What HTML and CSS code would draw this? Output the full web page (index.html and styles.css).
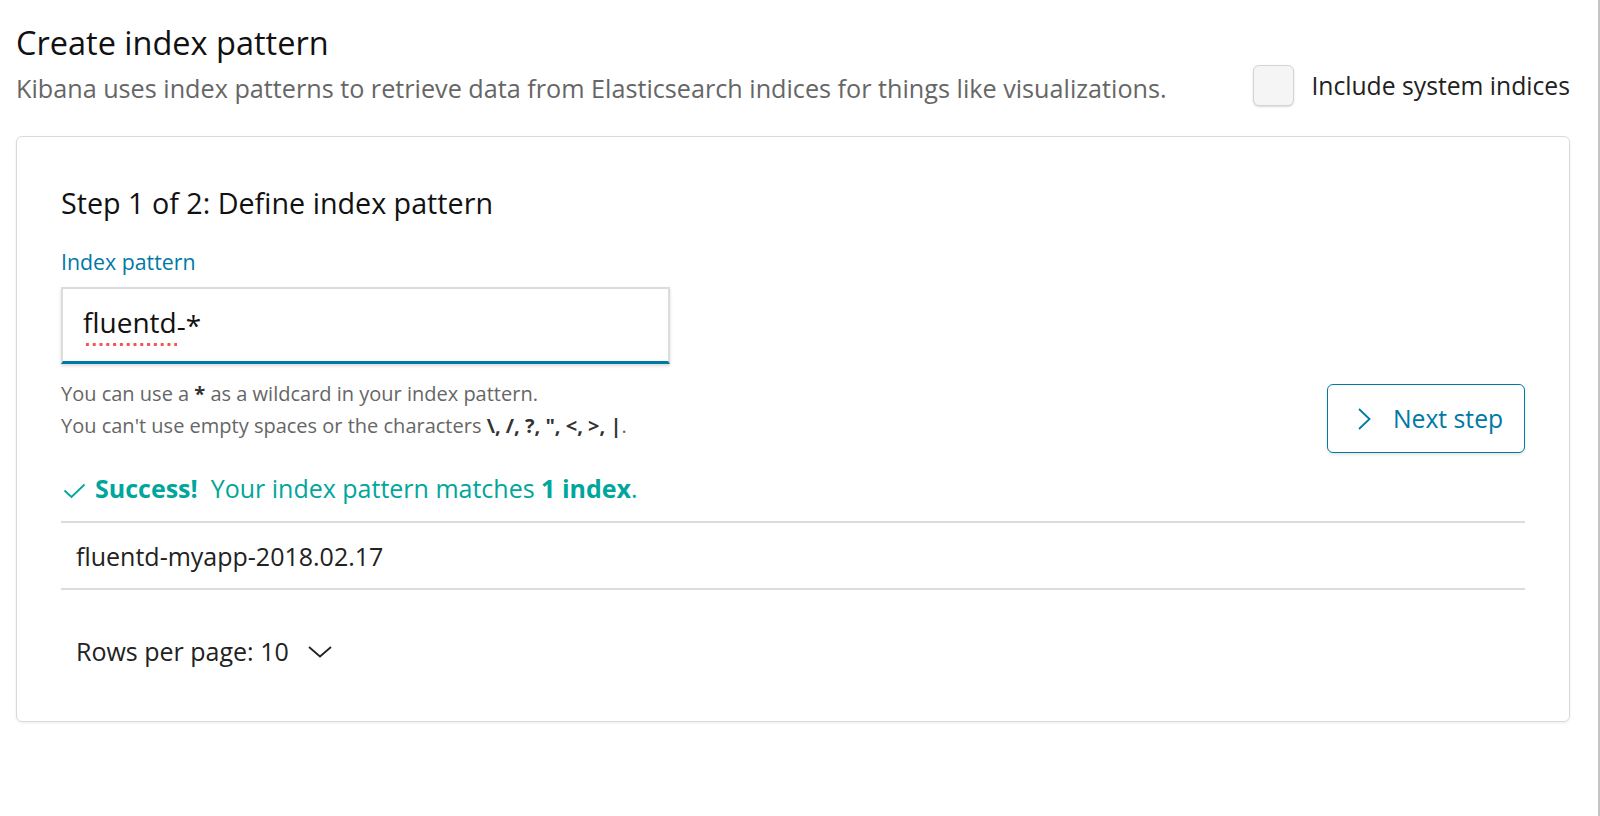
FILE: index.html
```html
<!DOCTYPE html>
<html lang="en">

<head>
    <meta charset="UTF-8">
    <meta name="viewport" content="width=device-width, initial-scale=1.0">
    <title>Create index pattern - Kibana</title>
    <link rel="stylesheet" href="styles.css">
</head>

<body>
    <div class="page">
        <!-- Header -->
        <div class="header">
            <div class="header-text">
                <h1>Create index pattern</h1>
                <p class="subtitle">Kibana uses index patterns to retrieve data from Elasticsearch indices for things like visualizations.</p>
            </div>
            <label class="system-toggle">
                <span class="checkbox"></span>
                <span>Include system indices</span>
            </label>
        </div>

        <!-- Step 1 -->
        <div class="panel">
            <h2>Step 1 of 2: Define index pattern</h2>

            <div class="form-row">
                <div class="field">
                    <div class="field-label">Index pattern</div>
                    <div class="field-input"><span class="misspelled">fluentd</span>-*</div>
                    <div class="help">
                        <p>You can use a <strong>*</strong> as a wildcard in your index pattern.</p>
                        <p>You can't use empty spaces or the characters <strong>\, /, ?, ", &lt;, &gt;, |</strong>.</p>
                    </div>
                </div>
                <button class="next-button">
                    <svg width="13" height="22" viewBox="0 0 13 22">
                        <polyline points="1,1 11.5,11 1,21" fill="none" stroke="#0079a5" stroke-width="1.8" />
                    </svg>
                    Next step
                </button>
            </div>

            <p class="success"><svg class="check" width="23" height="16" viewBox="0 0 23 16"><polyline points="1.5,7.5 8.5,14 21.5,1.5" fill="none" stroke="#00a69b" stroke-width="1.8" /></svg><strong>Success!</strong>&nbsp; Your index pattern matches <strong>1 index</strong>.</p>

            <div class="index-table">
                <div class="index-row">fluentd-myapp-2018.02.17</div>
            </div>

            <div class="pagination">
                <span>Rows per page: 10</span>
                <svg width="24" height="12" viewBox="0 0 24 12">
                    <polyline points="1,1 12,10.5 23,1" fill="none" stroke="#222" stroke-width="1.8" />
                </svg>
            </div>
        </div>
    </div>
</body>

</html>
```

FILE: styles.css
```css
* {
    box-sizing: border-box;
}

body {
    margin: 0;
    font-family: "Open Sans", "Liberation Sans", sans-serif;
    color: #222;
    background-color: #fff;
    border-right: 2px solid #c4c4c4;
    min-height: 100vh;
}

.page {
    padding: 22px 28px 0 16px;
}

.header {
    display: flex;
    justify-content: space-between;
    align-items: flex-end;
}

h1 {
    margin: 0;
    font-size: 32.5px;
    line-height: 42px;
    font-weight: 400;
    color: #111;
}

.subtitle {
    margin: 7px 0 0;
    font-size: 25.2px;
    line-height: 35px;
    color: #666;
}

.system-toggle {
    display: flex;
    align-items: center;
    gap: 17px;
    font-size: 24.7px;
    color: #222;
}

.checkbox {
    width: 41px;
    height: 41px;
    border: 1px solid #d4d4d4;
    border-radius: 6px;
    background-color: #f5f5f5;
    box-shadow: 0 1px 2px rgba(0, 0, 0, 0.15);
}

.panel {
    margin-top: 30px;
    padding: 42px 44px 52px;
    border: 1.5px solid #d9d9d9;
    border-radius: 6px;
    box-shadow: 0 1px 3px rgba(0, 0, 0, 0.08);
}

h2 {
    margin: 0;
    font-size: 28.7px;
    line-height: 48px;
    font-weight: 400;
    color: #111;
}

.form-row {
    display: flex;
    justify-content: space-between;
    align-items: flex-end;
}

.field {
    width: 609px;
}

.field-label {
    margin-top: 20px;
    font-size: 21.3px;
    line-height: 30px;
    color: #0079a5;
}

.field-input {
    margin-top: 10px;
    height: 77px;
    padding: 0 20px;
    display: flex;
    align-items: center;
    border: 2px solid #dcdcdc;
    border-bottom: 3px solid #0079a5;
    box-shadow: 0 2px 3px rgba(0, 0, 0, 0.15);
    font-size: 28px;
    color: #111;
}

.misspelled {
    padding-bottom: 6px;
    background-image: radial-gradient(circle, #f25555 1.6px, transparent 2px);
    background-size: 6.8px 5px;
    background-repeat: repeat-x;
    background-position: 1px 100%;
}

.help {
    margin-top: 14px;
    padding-bottom: 11px;
    font-size: 20px;
    line-height: 32px;
    color: #666;
    white-space: nowrap;
}

.help p {
    margin: 0;
}

.help strong {
    color: #333;
}

.next-button {
    display: flex;
    align-items: center;
    gap: 22px;
    width: 198px;
    height: 69px;
    padding: 0 0 0 30px;
    border: 1.5px solid #0079a5;
    border-radius: 6px;
    background-color: #fff;
    box-shadow: 0 2px 3px rgba(0, 0, 0, 0.1);
    font-family: inherit;
    font-size: 24.7px;
    color: #0079a5;
    cursor: pointer;
}

.success {
    margin: 18px 0 0;
    padding-left: 2px;
    font-size: 25px;
    line-height: 35px;
    color: #00a69b;
}

.success .check {
    margin-right: 9px;
    vertical-align: -1px;
}

.index-table {
    margin-top: 15px;
    border-top: 2px solid #dcdcdc;
    border-bottom: 2px solid #dcdcdc;
}

.index-row {
    height: 65px;
    padding-left: 15px;
    display: flex;
    align-items: center;
    font-size: 25px;
    color: #222;
}

.pagination {
    display: flex;
    align-items: center;
    gap: 19px;
    margin-top: 44px;
    padding-left: 15px;
    font-size: 25px;
    line-height: 35px;
    color: #222;
}
```
